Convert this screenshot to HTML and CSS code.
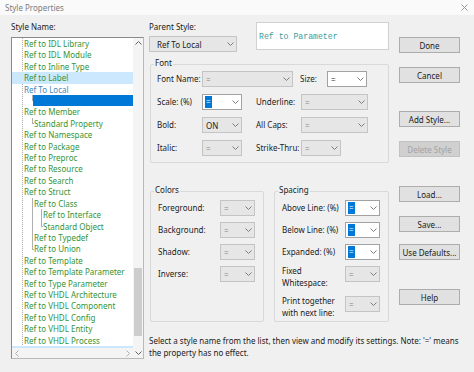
FILE: index.html
```html
<!DOCTYPE html>
<html lang="en">
<head>
    <meta charset="UTF-8">
    <title>Style Properties</title>
    <link rel="stylesheet" href="styles.css">
</head>
<body>
<div class="window">
    <div class="titlebar">
        <span>Style Properties</span>
        <svg class="close" viewBox="0 0 7 7"><path d="M0.5 0.5L6.5 6.5M6.5 0.5L0.5 6.5"/></svg>
    </div>

    <div class="dialog">
        <div class="left">
            <div class="caption">Style Name:</div>
            <div class="listbox">
                <div class="tree">
                    <div class="item">Ref to IDL Library</div>
                    <div class="item">Ref to IDL Module</div>
                    <div class="item">Ref to Inline Type</div>
                    <div class="item hover">Ref to Label</div>
                    <div class="item local">Ref To Local</div>
                    <div class="item l2 last sel"><span class="selbox"></span></div>
                    <div class="item">Ref to Member</div>
                    <div class="item l2 last">Standard Property</div>
                    <div class="item">Ref to Namespace</div>
                    <div class="item">Ref to Package</div>
                    <div class="item">Ref to Preproc</div>
                    <div class="item">Ref to Resource</div>
                    <div class="item">Ref to Search</div>
                    <div class="item">Ref to Struct</div>
                    <div class="item l2">Ref to Class</div>
                    <div class="item l3">Ref to Interface</div>
                    <div class="item l3 last">Standard Object</div>
                    <div class="item l2">Ref to Typedef</div>
                    <div class="item l2 last">Ref to Union</div>
                    <div class="item">Ref to Template</div>
                    <div class="item">Ref to Template Parameter</div>
                    <div class="item">Ref to Type Parameter</div>
                    <div class="item">Ref to VHDL Architecture</div>
                    <div class="item">Ref to VHDL Component</div>
                    <div class="item">Ref to VHDL Config</div>
                    <div class="item">Ref to VHDL Entity</div>
                    <div class="item">Ref to VHDL Process</div>
                    <div class="item partial"></div>
                </div>
                <div class="vscroll">
                    <div class="arrow"><svg class="sarrow" viewBox="0 0 7 4"><polyline points="0.5,3.5 3.5,0.5 6.5,3.5"/></svg></div>
                    <div class="thumb"></div>
                    <div class="spacer"></div>
                    <div class="arrow"><svg class="sarrow" viewBox="0 0 7 4"><polyline points="0.5,0.5 3.5,3.5 6.5,0.5"/></svg></div>
                </div>
                <div class="hscroll">
                    <svg class="harrow" viewBox="0 0 4 7"><polyline points="3.5,0.5 0.5,3.5 3.5,6.5"/></svg>
                    <svg class="harrow" viewBox="0 0 4 7"><polyline points="0.5,0.5 3.5,3.5 0.5,6.5"/></svg>
                </div>
            </div>
        </div>

        <div class="main">
            <div class="top-row">
                <div class="parent">
                    <div class="caption">Parent Style:</div>
                    <div class="combo parent-combo"><span>Ref To Local</span><svg class="chev" viewBox="0 0 7 4"><polyline points="0.5,0.5 3.5,3.5 6.5,0.5"/></svg></div>
                </div>
                <div class="preview">Ref to Parameter</div>
            </div>

            <div class="group font-group">
                <div class="group-title">Font</div>
                <div class="fields">
                    <div class="row">
                        <span class="lbl">Font Name:</span>
                        <div class="combo w91"><span>=</span><svg class="chev" viewBox="0 0 7 4"><polyline points="0.5,0.5 3.5,3.5 6.5,0.5"/></svg></div>
                        <span class="lbl size-lbl">Size:</span>
                        <div class="combo edit w40"><span class="dark">=</span><svg class="chev" viewBox="0 0 7 4"><polyline points="0.5,0.5 3.5,3.5 6.5,0.5"/></svg></div>
                    </div>
                    <div class="row">
                        <span class="lbl">Scale: (%)</span>
                        <div class="combo edit w40"><span class="picked">=</span><svg class="chev" viewBox="0 0 7 4"><polyline points="0.5,0.5 3.5,3.5 6.5,0.5"/></svg></div>
                        <span class="lbl second">Underline:</span>
                        <div class="combo w67"><span>=</span><svg class="chev" viewBox="0 0 7 4"><polyline points="0.5,0.5 3.5,3.5 6.5,0.5"/></svg></div>
                    </div>
                    <div class="row">
                        <span class="lbl">Bold:</span>
                        <div class="combo w40"><span class="dark">ON</span><svg class="chev" viewBox="0 0 7 4"><polyline points="0.5,0.5 3.5,3.5 6.5,0.5"/></svg></div>
                        <span class="lbl second">All Caps:</span>
                        <div class="combo w67"><span>=</span><svg class="chev" viewBox="0 0 7 4"><polyline points="0.5,0.5 3.5,3.5 6.5,0.5"/></svg></div>
                    </div>
                    <div class="row">
                        <span class="lbl">Italic:</span>
                        <div class="combo w40"><span>=</span><svg class="chev" viewBox="0 0 7 4"><polyline points="0.5,0.5 3.5,3.5 6.5,0.5"/></svg></div>
                        <span class="lbl second">Strike-Thru:</span>
                        <div class="combo w40"><span>=</span><svg class="chev" viewBox="0 0 7 4"><polyline points="0.5,0.5 3.5,3.5 6.5,0.5"/></svg></div>
                    </div>
                </div>
            </div>

            <div class="pair-groups">
                <div class="group colors">
                    <div class="group-title">Colors</div>
                    <div class="fields">
                        <div class="row"><span class="lbl">Foreground:</span><div class="combo w35"><span>=</span><svg class="chev" viewBox="0 0 7 4"><polyline points="0.5,0.5 3.5,3.5 6.5,0.5"/></svg></div></div>
                        <div class="row"><span class="lbl">Background:</span><div class="combo w35"><span>=</span><svg class="chev" viewBox="0 0 7 4"><polyline points="0.5,0.5 3.5,3.5 6.5,0.5"/></svg></div></div>
                        <div class="row"><span class="lbl">Shadow:</span><div class="combo w35"><span>=</span><svg class="chev" viewBox="0 0 7 4"><polyline points="0.5,0.5 3.5,3.5 6.5,0.5"/></svg></div></div>
                        <div class="row"><span class="lbl">Inverse:</span><div class="combo w35"><span>=</span><svg class="chev" viewBox="0 0 7 4"><polyline points="0.5,0.5 3.5,3.5 6.5,0.5"/></svg></div></div>
                    </div>
                </div>
                <div class="group spacing">
                    <div class="group-title">Spacing</div>
                    <div class="fields">
                        <div class="row"><span class="lbl">Above Line: (%)</span><div class="combo edit w35"><span class="picked">=</span><svg class="chev" viewBox="0 0 7 4"><polyline points="0.5,0.5 3.5,3.5 6.5,0.5"/></svg></div></div>
                        <div class="row"><span class="lbl">Below Line: (%)</span><div class="combo edit w35"><span class="picked">=</span><svg class="chev" viewBox="0 0 7 4"><polyline points="0.5,0.5 3.5,3.5 6.5,0.5"/></svg></div></div>
                        <div class="row"><span class="lbl">Expanded: (%)</span><div class="combo edit w35"><span class="picked">=</span><svg class="chev" viewBox="0 0 7 4"><polyline points="0.5,0.5 3.5,3.5 6.5,0.5"/></svg></div></div>
                        <div class="row tall"><span class="lbl two">Fixed<br>Whitespace:</span><div class="combo w35"><span>=</span><svg class="chev" viewBox="0 0 7 4"><polyline points="0.5,0.5 3.5,3.5 6.5,0.5"/></svg></div></div>
                        <div class="row tall last-row"><span class="lbl two">Print together<br>with next line:</span><div class="combo w35"><span>=</span><svg class="chev" viewBox="0 0 7 4"><polyline points="0.5,0.5 3.5,3.5 6.5,0.5"/></svg></div></div>
                    </div>
                </div>
            </div>
        </div>

        <div class="buttons">
            <div class="btn done">Done</div>
            <div class="btn cancel">Cancel</div>
            <div class="btn add">Add Style...</div>
            <div class="btn delete disabled">Delete Style</div>
            <div class="btn load">Load...</div>
            <div class="btn save">Save...</div>
            <div class="btn defaults">Use Defaults...</div>
            <div class="btn help">Help</div>
        </div>

        <p class="hint">Select a style name from the list, then view and modify its settings. Note: '=' means<br>the property has no effect.</p>
    </div>
</div>
</body>
</html>
```

FILE: styles.css
```css
/* Base */
* { box-sizing: border-box; }
body { margin: 0; background: #f0f0f0; font-family: "Noto Sans", Arial, sans-serif; font-size: 8px; color: #1b1b1b; }
.window { width: 474px; height: 372px; overflow: hidden; }

/* Title bar */
.titlebar { height: 15px; background: #fafafa; display: flex; align-items: center; justify-content: space-between; padding: 0 6px 0 5px; color: #7c7c7c; }
.close { width: 7px; height: 7px; stroke: #9a9a9a; stroke-width: 1; }

/* Dialog layout */
.dialog { display: grid; grid-template-columns: 133px 255px 61px; padding-left: 11px; }
.left { grid-row: 1 / 3; }
.caption { margin-top: 6px; line-height: 12px; }

/* Style list */
.listbox { margin-top: 4px; height: 322px; border: 1px solid #8a8a8a; border-right-color: #b9b9b9; border-bottom-color: #b9b9b9; background: #fff; display: grid; grid-template-columns: 1fr 10px; grid-template-rows: 1fr 10px; }
.tree { overflow: hidden; background: linear-gradient(#ababab 50%, transparent 50%) 10px 0 / 1px 2px repeat-y; }
.item { height: 11.42px; line-height: 11.42px; padding-left: 12px; color: #359435; white-space: nowrap; }
.item.local { color: #4189bd; }
.item.hover { background: #cce8ff; }
.item.l2 { padding-left: 22px; background: linear-gradient(#b0b0b0, #b0b0b0) 20px 0 / 1px 100% no-repeat; }
.item.l2.last { background: linear-gradient(#b0b0b0, #b0b0b0) 20px 0 / 1px 50% no-repeat, linear-gradient(#b0b0b0, #b0b0b0) 20px 50% / 2px 1px no-repeat; }
.item.l3 { padding-left: 31px; background: linear-gradient(#b0b0b0, #b0b0b0) 20px 0 / 1px 100% no-repeat, linear-gradient(#b0b0b0, #b0b0b0) 29px 0 / 1px 100% no-repeat; }
.item.l3.last { background: linear-gradient(#b0b0b0, #b0b0b0) 20px 0 / 1px 100% no-repeat, linear-gradient(#b0b0b0, #b0b0b0) 29px 0 / 1px 50% no-repeat, linear-gradient(#b0b0b0, #b0b0b0) 29px 50% / 2px 1px no-repeat; }
.item.sel { padding-left: 21px; }
.selbox { display: block; height: 100%; background: #0078d7; }
.item.partial { background: #cce8ff; }

.vscroll { grid-row: 1 / 3; grid-column: 2; background: #f4f4f4; display: flex; flex-direction: column; align-items: center; }
.arrow { height: 10px; width: 100%; display: flex; align-items: center; justify-content: center; flex: none; }
.sarrow { width: 7px; height: 4px; fill: none; stroke: #606060; }
.thumb { width: 8px; height: 68px; margin-top: 220px; background: #cdcdcd; flex: none; }
.spacer { flex: 1; }
.hscroll { grid-column: 1; grid-row: 2; background: #f4f4f4; display: flex; justify-content: space-between; align-items: center; padding: 0 3px; }
.harrow { width: 4px; height: 7px; fill: none; stroke: #b0b0b0; }

/* Main panel */
.main { padding-left: 5px; }
.top-row { display: flex; }
.parent { width: 88px; }
.preview { width: 133px; height: 28px; margin: 7px 0 0 19px; background: #fff; border: 1px solid #d0d0d0; display: flex; align-items: center; padding-left: 2px; font-family: "Liberation Mono", monospace; font-size: 8.2px; color: #3a9ea0; }

.combo { height: 16px; border: 1px solid #c4c4c4; background: #e6e6e6; display: flex; align-items: center; justify-content: space-between; padding: 0 2px 0 3px; color: #858585; flex: none; }
.combo.edit { background: #fff; border-color: #a2a2a2; }
.parent-combo { margin-top: 3px; padding-left: 7px; color: #1b1b1b; }
.chev { width: 7px; height: 4px; fill: none; stroke: #7d7d7d; stroke-width: 1; }
.dark { color: #1b1b1b; }
.picked { background: #0078d7; color: #fff; line-height: 12px; padding: 0 1px; margin-left: -1px; }
.w35 { width: 35px; }
.w40 { width: 40px; }
.w67 { width: 67px; }
.w91 { width: 91px; }

/* Group boxes */
.group { border: 1px solid #d9d9d9; border-radius: 2px; }
.group-title { width: fit-content; margin: -8px 0 0 3px; padding: 0 1px; line-height: 12px; background: #f0f0f0; }
.font-group { width: 239px; height: 99px; margin: 12px 0 0 1px; }
.fields { display: flex; flex-direction: column; gap: 7px; margin-top: 2px; padding-left: 6px; }
.row { display: flex; align-items: center; }
.lbl { width: 45px; flex: none; line-height: 12px; white-space: nowrap; }
.lbl.second { margin-left: 14px; }
.lbl.size-lbl { width: 27px; margin-left: 7px; }

.pair-groups { display: flex; margin: 28px 0 0 1px; }
.colors { width: 114px; height: 131px; }
.spacing { width: 115px; height: 131px; margin-left: 10px; }
.colors .fields, .spacing .fields { gap: 6px; margin-top: 4px; padding-left: 7px; }
.colors .lbl { width: 62px; }
.spacing .lbl { width: 63px; }
.row.tall { align-items: flex-start; }
.lbl.two { line-height: 11.5px; margin-top: -1px; }
.row.last-row { margin-top: 2px; }

/* Buttons */
.buttons { display: flex; flex-direction: column; }
.btn { height: 16px; border: 1px solid #adadad; background: #e1e1e1; display: flex; align-items: center; justify-content: center; white-space: nowrap; }
.btn.disabled { background: #d0d0d0; border-color: #c2c2c2; color: #a3a3a3; }
.done { margin-top: 22px; }
.cancel { margin-top: 14px; }
.add { margin-top: 28px; }
.delete { margin-top: 14px; }
.load { margin-top: 29px; }
.save { margin-top: 14px; }
.defaults { margin-top: 12px; }
.help { margin-top: 29px; }

.hint { grid-column: 2 / 4; margin: 12px 0 0; padding-left: 5px; line-height: 12px; white-space: nowrap; }
```
